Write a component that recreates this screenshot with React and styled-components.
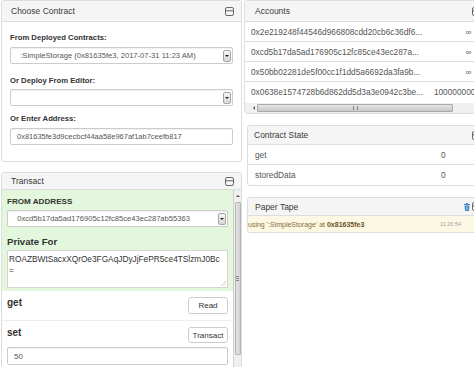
import React from 'react'
import styled, { createGlobalStyle } from 'styled-components'

const GlobalStyle = createGlobalStyle`
  html, body {
    margin: 0;
    padding: 0;
    background: #fff;
  }
  body {
    font-family: "Liberation Sans", Arial, sans-serif;
    color: #333;
    overflow: hidden;
  }
  * { box-sizing: border-box; }
`

const Page = styled.div`
  display: flex;
  align-items: flex-start;
  width: 474px;
  height: 367px;
  overflow: hidden;
  padding-left: 1px;
`

const LeftColumn = styled.div`
  width: 241px;
  flex-shrink: 0;
  display: flex;
  flex-direction: column;
  gap: 10px;
`

const RightColumn = styled.div`
  width: 245px;
  flex-shrink: 0;
  margin-left: 2px;
  display: flex;
  flex-direction: column;
  gap: ${({ $gap }) => $gap || 11}px;
`

const Panel = styled.div`
  border: 1px solid #ddd;
  border-radius: 3px;
  background: #fff;
  overflow: hidden;
  margin-left: ${({ $indent }) => $indent || 0}px;
`

const PanelHeader = styled.div`
  height: ${({ $h }) => $h || 21}px;
  display: flex;
  align-items: center;
  justify-content: space-between;
  padding: 0 7px 0 ${({ $pl }) => $pl || 9}px;
  background: #f5f5f5;
  border-bottom: 1px solid #ddd;
  font-size: 8.5px;
  color: #3a3a3a;
`

const HeaderIcons = styled.div`
  display: flex;
  align-items: center;
  gap: 2px;
`

const FormBody = styled.div`
  padding: 11px 8px 16px 8px;
`

const Field = styled.div`
  display: flex;
  flex-direction: column;
  margin-bottom: ${({ $mb }) => $mb || 0}px;
`

const FieldLabel = styled.div`
  font-size: ${({ $size }) => $size || 7.7}px;
  line-height: ${({ $lh }) => $lh || 10}px;
  font-weight: bold;
  color: #333;
  margin-bottom: ${({ $gap }) => $gap || 3}px;
`

const SelectBox = styled.div`
  height: 17px;
  display: flex;
  align-items: center;
  border: 1px solid #ccc;
  border-radius: 2px;
  background: #fff;
  padding: 0 1px 0 5px;
  font-size: 7.6px;
  color: #555;
  white-space: pre;
  box-shadow: inset 0 1px 1px rgba(0, 0, 0, 0.06);
`

const DropButton = styled.span`
  width: 8px;
  height: 12px;
  margin-left: auto;
  border: 1px solid #a6a6a6;
  border-radius: 2px;
  background: linear-gradient(#f6f6f6, #d6d6d6);
  display: flex;
  align-items: center;
  justify-content: center;

  &::after {
    content: '';
    border-left: 2px solid transparent;
    border-right: 2px solid transparent;
    border-top: 2px solid #222;
  }
`

const TextInput = styled.div`
  height: ${({ $h }) => $h || 17}px;
  display: flex;
  align-items: center;
  border: 1px solid #ccc;
  border-radius: 2px;
  background: #fff;
  padding-left: ${({ $pl }) => $pl || 6}px;
  font-size: 7.5px;
  color: #555;
  box-shadow: inset 0 1px 1px rgba(0, 0, 0, 0.06);
`

const TransactBody = styled.div`
  display: flex;
  height: 190px;
`

const TransactContent = styled.div`
  flex: 1;
  display: flex;
  flex-direction: column;
`

const SenderBox = styled.div`
  background: #e3f7dc;
  padding: 7px 5px 3px 5px;
`

const TextArea = styled.div`
  position: relative;
  height: 38px;
  border: 1px solid #d6d6d6;
  background: #fff;
  padding: 3px 1px;
  font-size: 8.3px;
  line-height: 11px;
  color: #333;
  white-space: pre;
`

const ResizeGrip = styled.svg`
  position: absolute;
  right: 1px;
  bottom: 1px;
`

const ActionRow = styled.div`
  display: flex;
  justify-content: space-between;
  align-items: flex-start;
  padding: 6px 5px ${({ $pb }) => $pb || 0}px 5px;
  border-bottom: ${({ $divider }) => ($divider ? '1px solid #eee' : 'none')};
`

const ActionName = styled.div`
  font-size: 10px;
  line-height: 12px;
  font-weight: bold;
  color: #333;
`

const ActionButton = styled.div`
  width: 40px;
  height: ${({ $h }) => $h || 17}px;
  display: flex;
  align-items: center;
  justify-content: center;
  border: 1px solid #ccc;
  border-radius: 3px;
  background: #fff;
  font-size: 8px;
  color: #333;
`

const ArgInput = styled(TextInput)`
  margin: 4px 5px 0 5px;
  height: 18px;
  font-size: 8px;
`

const VScroll = styled.div`
  width: 8px;
  flex-shrink: 0;
  display: flex;
  flex-direction: column;
  align-items: center;
  background: #efefef;
  border-left: 1px solid #cfcfcf;
`

const ScrollArrow = styled.div`
  height: 12px;
  display: flex;
  align-items: center;
  justify-content: center;

  &::after {
    content: '';
    border-left: 2px solid transparent;
    border-right: 2px solid transparent;
    border-bottom: 2px solid #555;
  }
`

const VThumb = styled.div`
  width: 6px;
  height: 153px;
  border: 1px solid #b4b4b4;
  border-radius: 1px;
  background: linear-gradient(90deg, #e4e4e4, #d2d2d2);
  display: flex;
  align-items: center;
  justify-content: center;
`

const Grip = styled.div`
  width: 3px;
  height: 5px;
  border-top: 1px solid #888;
  border-bottom: 1px solid #888;
  position: relative;

  &::after {
    content: '';
    position: absolute;
    left: 0;
    right: 0;
    top: 1px;
    border-top: 1px solid #888;
  }
`

const RowList = styled.div`
  overflow: hidden;
`

const AccountRow = styled.div`
  height: 20px;
  display: grid;
  grid-template-columns: 177px 81px;
  align-items: center;
  padding-left: 6px;
  border-bottom: ${({ $last }) => ($last ? 'none' : '1px solid #ddd')};
  font-size: 8.3px;
  color: #555;
  white-space: nowrap;
`

const Balance = styled.span`
  text-align: center;
`

const HScroll = styled.div`
  height: 10px;
  margin-top: 1px;
  display: flex;
  align-items: center;
  padding-left: 6px;
  background: #f0f0f0;
`

const HArrow = styled.span`
  width: 6px;
  display: flex;
  justify-content: center;

  &::after {
    content: '';
    border-top: 2px solid transparent;
    border-bottom: 2px solid transparent;
    border-${({ $dir }) => ($dir === 'left' ? 'right' : 'left')}: 2px solid #555;
  }
`

const HThumb = styled.div`
  width: 196px;
  height: 8px;
  border: 1px solid #aaa;
  border-radius: 1px;
  background: linear-gradient(#e4e4e4, #c8c8c8);
  display: flex;
  align-items: center;
  justify-content: center;
`

const HGrip = styled.div`
  width: 5px;
  height: 4px;
  border-left: 1px solid #888;
  border-right: 1px solid #888;
`

const HTrack = styled.div`
  flex: 1;
`

const StateRow = styled.div`
  height: 20px;
  display: flex;
  align-items: center;
  padding-left: 7px;
  border-bottom: ${({ $last }) => ($last ? 'none' : '1px solid #ddd')};
  font-size: 8.3px;
  color: #555;
`

const StateName = styled.span`
  flex: 1;
`

const StateValue = styled.span`
  width: 47px;
`

const LogRow = styled.div`
  height: 16px;
  display: flex;
  align-items: center;
  justify-content: space-between;
  padding: 0 3px 0 0;
  background: #fcf8e3;
  font-size: 7px;
  color: #8a6d3b;
  white-space: pre;
`

const LogAddress = styled.b`
  color: #6b5226;
`

const LogTime = styled.span`
  font-size: 5.5px;
  color: #a0a0a0;
  width: 45px;
`

const CollapseIcon = () => (
  <svg width="9" height="9" viewBox="0 0 9 9">
    <rect x="0.5" y="0.5" width="8" height="8" rx="1.6" fill="none" stroke="#555" strokeWidth="0.9" />
    <line x1="0.5" y1="3.8" x2="8.5" y2="3.8" stroke="#555" strokeWidth="0.9" />
  </svg>
)

const TrashIcon = () => (
  <svg width="6" height="8" viewBox="0 0 6 8">
    <rect x="0" y="1" width="6" height="1" fill="#3f86c6" />
    <rect x="2" y="0" width="2" height="1" fill="#3f86c6" />
    <path d="M0.6 2.6 H5.4 L5 8 H1 Z" fill="#3f86c6" />
    <rect x="2.6" y="3.4" width="0.8" height="3.6" fill="#dbe9f6" />
  </svg>
)

const accounts = [
  { address: '0x2e219248f44546d966808cdd20cb6c36df6...', balance: '∞' },
  { address: '0xcd5b17da5ad176905c12fc85ce43ec287a...', balance: '∞' },
  { address: '0x50bb02281de5f00cc1f1dd5a6692da3fa9b...', balance: '∞' },
  { address: '0x0638e1574728b6d862dd5d3a3e0942c3be...', balance: '100000000000000' }
]

const contractState = [
  { name: 'get', value: '0' },
  { name: 'storedData', value: '0' }
]

export default function App () {
  return (
    <>
      <GlobalStyle />
      <Page>
        <LeftColumn>
          <Panel>
            <PanelHeader>
              Choose Contract
              <CollapseIcon />
            </PanelHeader>
            <FormBody>
              <Field $mb={12}>
                <FieldLabel $gap={4}>From Deployed Contracts:</FieldLabel>
                <SelectBox>
                  {'  :SimpleStorage (0x81635fe3, 2017-07-31 11:23 AM)'}
                  <DropButton />
                </SelectBox>
              </Field>
              <Field $mb={8}>
                <FieldLabel>Or Deploy From Editor:</FieldLabel>
                <SelectBox>
                  <DropButton />
                </SelectBox>
              </Field>
              <Field>
                <FieldLabel $gap={4}>Or Enter Address:</FieldLabel>
                <TextInput>0x81635fe3d9cecbcf44aa58e967af1ab7ceefb817</TextInput>
              </Field>
            </FormBody>
          </Panel>

          <Panel>
            <PanelHeader $h={17}>
              Transact
              <CollapseIcon />
            </PanelHeader>
            <TransactBody>
              <TransactContent>
                <SenderBox>
                  <Field $mb={9}>
                    <FieldLabel $size={8.1}>FROM ADDRESS</FieldLabel>
                    <SelectBox>
                      {'  0xcd5b17da5ad176905c12fc85ce43ec287ab55363'}
                      <DropButton />
                    </SelectBox>
                  </Field>
                  <Field>
                    <FieldLabel $size={9.6} $lh={12} $gap={2}>Private For</FieldLabel>
                    <TextArea>
                      {'ROAZBWtSacxXQrOe3FGAqJDyJjFePR5ce4TSlzmJ0Bc\n='}
                      <ResizeGrip width="5" height="5" viewBox="0 0 5 5">
                        <line x1="0" y1="5" x2="5" y2="0" stroke="#bbb" strokeWidth="0.7" />
                        <line x1="2.5" y1="5" x2="5" y2="2.5" stroke="#bbb" strokeWidth="0.7" />
                      </ResizeGrip>
                    </TextArea>
                  </Field>
                </SenderBox>
                <ActionRow $pb={6} $divider>
                  <ActionName>get</ActionName>
                  <ActionButton>Read</ActionButton>
                </ActionRow>
                <ActionRow>
                  <ActionName>set</ActionName>
                  <ActionButton $h={16}>Transact</ActionButton>
                </ActionRow>
                <ArgInput>50</ArgInput>
              </TransactContent>
              <VScroll>
                <ScrollArrow />
                <VThumb>
                  <Grip />
                </VThumb>
              </VScroll>
            </TransactBody>
          </Panel>
        </LeftColumn>

        <RightColumn>
          <Panel>
            <PanelHeader $pl={10}>
              Accounts
              <CollapseIcon />
            </PanelHeader>
            <RowList>
              {accounts.map((acc, i) => (
                <AccountRow key={acc.address} $last={i === accounts.length - 1}>
                  <span>{acc.address}</span>
                  <Balance>{acc.balance}</Balance>
                </AccountRow>
              ))}
            </RowList>
            <HScroll>
              <HArrow $dir="left" />
              <HThumb>
                <HGrip />
              </HThumb>
              <HTrack />
              <HArrow $dir="right" />
            </HScroll>
          </Panel>

          <Panel $indent={3}>
            <PanelHeader $h={19} $pl={6}>
              Contract State
              <CollapseIcon />
            </PanelHeader>
            {contractState.map((row, i) => (
              <StateRow key={row.name} $last={i === contractState.length - 1}>
                <StateName>{row.name}</StateName>
                <StateValue>{row.value}</StateValue>
              </StateRow>
            ))}
          </Panel>

          <Panel $indent={3}>
            <PanelHeader $h={18} $pl={7}>
              Paper Tape
              <HeaderIcons>
                <TrashIcon />
                <CollapseIcon />
              </HeaderIcons>
            </PanelHeader>
            <LogRow>
              <span>
                {"using ':SimpleStorage' at "}
                <LogAddress>0x81635fe3</LogAddress>
              </span>
              <LogTime>11:26:54</LogTime>
            </LogRow>
          </Panel>
        </RightColumn>
      </Page>
    </>
  )
}
